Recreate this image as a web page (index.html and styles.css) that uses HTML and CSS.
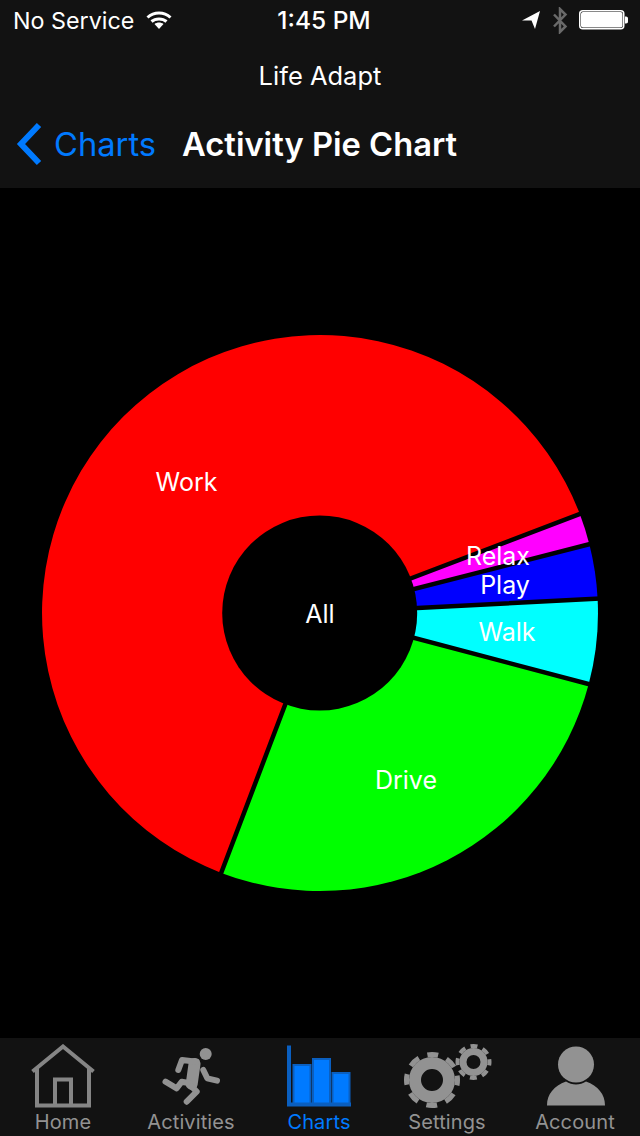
FILE: index.html
```html
<!DOCTYPE html>
<html lang="en">
<head>
<meta charset="utf-8">
<title>Activity Pie Chart</title>
<link rel="stylesheet" href="styles.css">
</head>
<body>
<div class="app">
  <header class="header">
    <div class="status">
      <div class="status-left">
        <span>No Service</span>
        <svg class="wifi" viewBox="0 0 26 20" width="26" height="20">
          <path class="wifi-arc" d="M1.5 7.5C8 1.5 18 1.5 24.500 7.500"/>
          <path class="wifi-arc" d="M5.500 11.500C9.500 8 16.500 8 20.500 11.500"/>
          <path class="wifi-dot" d="M8.500 14C11 12 15 12 17.500 14L13 19Z"/>
        </svg>
      </div>
      <div class="status-time">1:45 PM</div>
      <div class="status-right">
        <svg class="loc" viewBox="0 0 20 20" width="20" height="20"><path d="M19 1L1 10.500L10.500 10.500L14 19Z"/></svg>
        <svg class="bt" viewBox="0 0 16 27" width="16" height="27"><path d="M2 7.500L13.500 19.500L8 25V2L13.500 7.500L2 19.500"/></svg>
        <svg class="battery" viewBox="0 0 50 20" width="50" height="20">
          <rect class="batt-body" x="0.750" y="0.750" width="44" height="18" rx="3"/>
          <rect class="batt-fill" x="2" y="2" width="41.500" height="15.500" rx="2"/>
          <path class="batt-fill" d="M46 6.500H47C48.500 6.500 49 7.500 49 8.500V11.500C49 12.500 48.500 13.500 47 13.500H46Z"/>
        </svg>
      </div>
    </div>
    <div class="app-title">Life Adapt</div>
    <nav class="nav">
      <a class="back">
        <svg class="chevron" viewBox="0 0 26 44" width="26" height="44"><path d="M23 3L5 22L23 41"/></svg>
        <span>Charts</span>
      </a>
      <h1 class="nav-title">Activity Pie Chart</h1>
    </nav>
  </header>

  <main class="chart">
    <svg class="pie" viewBox="0 188 640 850" width="640" height="850">
      <path class="work" d="M320 613L579.800 514A278 278 0 1 0 221.300 872.900Z"/>
      <path class="drive" d="M320 613L221.300 872.900A278 278 0 0 0 588.800 683.800Z"/>
      <path class="walk" d="M320 613L588.800 683.800A278 278 0 0 0 597.600 598.500Z"/>
      <path class="play" d="M320 613L597.600 598.500A278 278 0 0 0 589.200 543.700Z"/>
      <path class="relax" d="M320 613L589.200 543.700A278 278 0 0 0 579.800 514Z"/>
      <path class="sep" d="M320 613L586 511.600M320 613L596 542.500M320 613L605 598.300M320 613L596 686M320 613L218.500 880"/>
      <circle class="hole" cx="319.700" cy="613" r="97.500"/>
      <text class="label" x="186.500" y="491">Work</text>
      <text class="label" x="320" y="622.500">All</text>
      <text class="label" x="406" y="789">Drive</text>
      <text class="label" x="507" y="641">Walk</text>
      <text class="label" x="505" y="594">Play</text>
      <text class="label" x="498" y="565">Relax</text>
    </svg>
  </main>

  <footer class="tabs">
    <div class="tab">
      <svg class="icon" viewBox="31 1044 64 64" width="64" height="64">
        <path class="outline" d="M32.500 1071.500L63 1046.500L93.500 1071.500"/>
        <path class="outline" d="M37 1067V1105.500H89V1067"/>
        <path class="outline" d="M55 1105.500V1079.500H71V1105.500"/>
      </svg>
      <span>Home</span>
    </div>
    <div class="tab">
      <svg class="icon" viewBox="159 1044 64 64" width="64" height="64">
        <circle class="solid" cx="205.700" cy="1054" r="6"/>
        <path class="limb-thick" d="M194.500 1064L191.700 1084"/>
        <path class="limb" d="M196.700 1061.700L182 1060L178.300 1070"/>
        <path class="limb" d="M203.300 1070L207.300 1078.300L217 1080.700"/>
        <path class="limb" d="M190 1083.300L181.700 1081.700L176.700 1088.300L165.500 1081.700"/>
        <path class="limb" d="M191.700 1086.700L196.700 1091.700L186.700 1101.700"/>
      </svg>
      <span>Activities</span>
    </div>
    <div class="tab tab-active">
      <svg class="icon" viewBox="287 1044 64 64" width="64" height="64">
        <path class="axis" d="M289 1045.500V1104.500H351"/>
        <rect class="bar" x="293.500" y="1065" width="17" height="38.500"/>
        <rect class="bar" x="313" y="1059" width="17" height="44.500"/>
        <rect class="bar" x="332.500" y="1073" width="17" height="30.500"/>
      </svg>
      <span>Charts</span>
    </div>
    <div class="tab">
      <svg class="icon" viewBox="402 1044 90 64" width="90" height="64">
        <circle class="gear-ring-lg" cx="432" cy="1080" r="17"/>
        <circle class="gear-teeth-lg" cx="432" cy="1080" r="25.500"/>
        <circle class="gear-ring-sm" cx="473.500" cy="1062" r="10.500"/>
        <circle class="gear-teeth-sm" cx="473.500" cy="1062" r="16"/>
      </svg>
      <span>Settings</span>
    </div>
    <div class="tab">
      <svg class="icon" viewBox="543 1044 64 64" width="64" height="64">
        <circle class="solid" cx="576" cy="1064.500" r="18"/>
        <path class="solid" d="M547 1105.500C547 1094 554 1086 566 1081.500C572 1085.500 580 1085.500 586 1081.500C598 1086 605 1094 605 1105.500Z"/>
      </svg>
      <span>Account</span>
    </div>
  </footer>
</div>
</body>
</html>
```
FILE: styles.css
```css
* { box-sizing: border-box; }
html, body { margin: 0; padding: 0; background: #000; }
body { font-family: Inter, "Liberation Sans", sans-serif; color: #fff; }
.app { width: 640px; height: 1136px; display: flex; flex-direction: column; overflow: hidden; }

.header { height: 188px; background: #121212; flex: none; }
.status { height: 40px; display: grid; grid-template-columns: 1fr auto 1fr; align-items: center; padding: 0 11px 0 13px; font-size: 23.300px; }
.status-left { display: flex; align-items: center; gap: 12px; }
.status-time { font-size: 24.500px; font-weight: 500; padding-left: 6px; }
.status-right { display: flex; align-items: center; justify-content: flex-end; gap: 11px; }
.wifi-arc { fill: none; stroke: #fff; stroke-width: 3; }
.wifi-dot, .loc path { fill: #fff; }
.bt path { fill: none; stroke: #6a6a6a; stroke-width: 2.500; }
.batt-body { fill: none; stroke: #fff; stroke-width: 1.500; }
.batt-fill { fill: #fff; }

.app-title { height: 36px; margin-top: 18px; line-height: 36px; text-align: center; font-size: 25.500px; }
.nav { height: 64px; margin-top: 18px; display: flex; align-items: center; gap: 26px; padding-left: 16px; }
.back { display: flex; align-items: center; gap: 12px; color: #007aff; font-size: 32.700px; }
.chevron path { fill: none; stroke: #007aff; stroke-width: 6; }
.nav-title { margin: 0; font-size: 32.700px; font-weight: 600; }

.chart { flex: 1; background: #000; }
.pie { display: block; }
.work { fill: #f00; }
.drive { fill: #0f0; }
.walk { fill: #0ff; }
.play { fill: #00f; }
.relax { fill: #f0f; }
.sep { fill: none; stroke: #000; stroke-width: 4.500; }
.hole { fill: #000; }
.label { fill: #fff; font-size: 25px; text-anchor: middle; }

.tabs { height: 98px; flex: none; background: #121212; display: grid; grid-template-columns: repeat(5, 128px); }
.tab { display: flex; flex-direction: column; align-items: center; padding: 6px 2px 0 0; color: #929292; font-size: 20px; letter-spacing: 0.120px; line-height: 28px; }
.tab-active { color: #007aff; }
.icon { display: block; flex: none; }
.solid { fill: #929292; }
.outline { fill: none; stroke: #858585; stroke-width: 4; }
.limb { fill: none; stroke: #929292; stroke-width: 6; stroke-linejoin: round; stroke-linecap: round; }
.limb-thick { fill: none; stroke: #929292; stroke-width: 12; stroke-linecap: round; }
.axis { fill: none; stroke: #0a5fc0; stroke-width: 4; }
.bar { fill: #007aff; stroke: #0a5fc0; stroke-width: 2; }
.gear-ring-lg { fill: none; stroke: #929292; stroke-width: 12; }
.gear-teeth-lg { fill: none; stroke: #929292; stroke-width: 5; stroke-dasharray: 11 9.027; stroke-dashoffset: 5.500; }
.gear-ring-sm { fill: none; stroke: #929292; stroke-width: 7; }
.gear-teeth-sm { fill: none; stroke: #929292; stroke-width: 4; stroke-dasharray: 7 5.566; stroke-dashoffset: 3.500; }
```
